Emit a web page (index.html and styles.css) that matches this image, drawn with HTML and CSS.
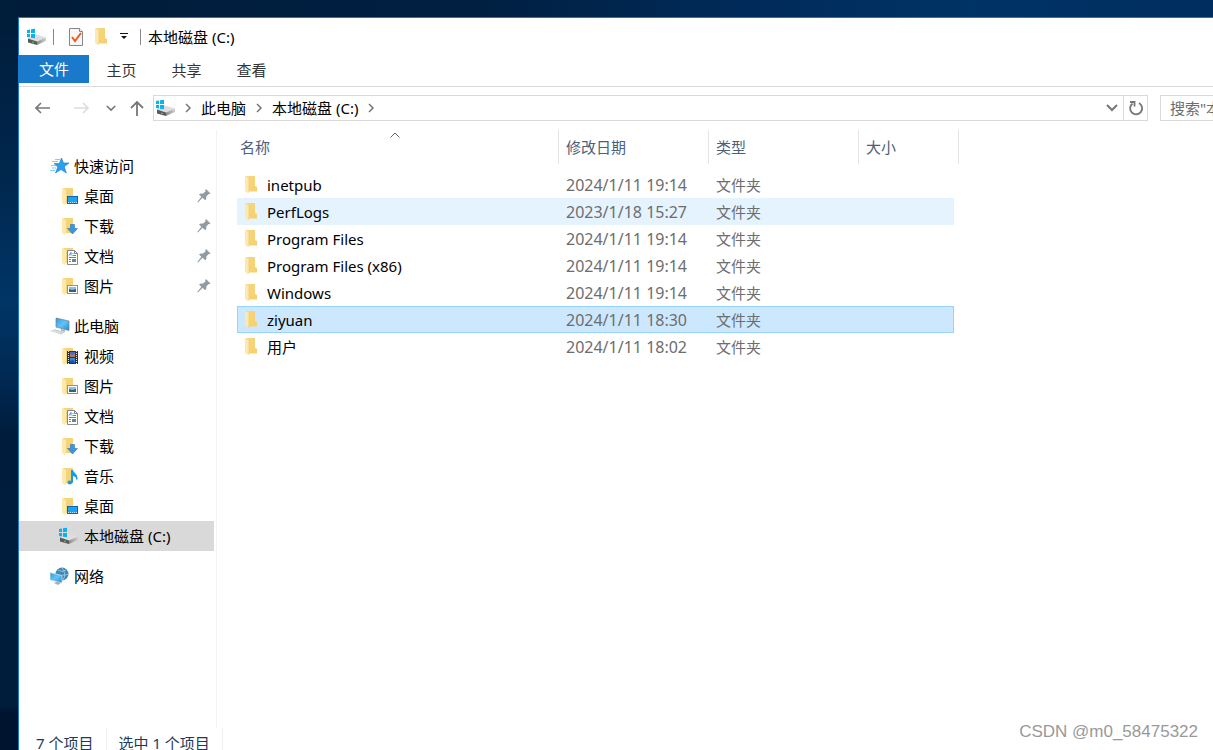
FILE: index.html
```
<!DOCTYPE html>
<html lang="zh-CN">
<head>
    <meta charset="UTF-8">
    <title>本地磁盘 (C:)</title>
    <link rel="stylesheet" href="styles.css">
</head>
<body>
    <!-- shared icons -->
    <svg class="sprite" aria-hidden="true">
        <defs>
            <linearGradient id="gFolder" x1="0" y1="0" x2="1" y2="1">
                <stop offset="0" stop-color="#f6d682"/>
                <stop offset="1" stop-color="#f5d06c"/>
            </linearGradient>
            <linearGradient id="gScreen" x1="0" y1="0" x2="1" y2="1">
                <stop offset="0" stop-color="#2f9be0"/>
                <stop offset="0.5" stop-color="#63c3f7"/>
                <stop offset="1" stop-color="#1d8ad6"/>
            </linearGradient>
            <linearGradient id="gDisk" x1="0" y1="0" x2="1" y2="0">
                <stop offset="0" stop-color="#8c8c8c"/>
                <stop offset="1" stop-color="#d0d0d0"/>
            </linearGradient>
        </defs>
        <symbol id="folder" viewBox="0 0 18 18">
            <path d="M2 0h9v10l2 1v4.500H5z" fill="url(#gFolder)"/>
            <path d="M1 0l4 2v13l-1 2-3-2z" fill="#fde8ae"/>
            <path d="M5 2v13l-1 2" fill="none" stroke="#edc968" stroke-width=".6"/>
        </symbol>
        <symbol id="side-folder" viewBox="0 0 18 18">
            <path d="M2 1h10v15H5z" fill="url(#gFolder)"/>
            <path d="M1 1l4 2v13l-1 2-3-2z" fill="#fde8ae"/>
        </symbol>
        <symbol id="desktop" viewBox="0 0 18 18">
            <use href="#side-folder"/>
            <rect x="6.500" y="9.500" width="10" height="7" fill="#1ba1f5" stroke="#0868a8"/>
            <path d="M7 15.500h9" stroke="#b8e6ff" stroke-dasharray="1 1"/>
        </symbol>
        <symbol id="download" viewBox="0 0 18 18">
            <use href="#side-folder"/>
            <path d="M9.500 7.500h4v4h3L11.500 17 6.500 11.500h3z" fill="#3b95e0" stroke="#2478c0" stroke-width=".6"/>
        </symbol>
        <symbol id="document" viewBox="0 0 18 18">
            <use href="#side-folder"/>
            <path d="M6.500 3.500h7l3 3v11h-10z" fill="#fff" stroke="#808890"/>
            <path d="M13.500 3.500v3h3" fill="none" stroke="#808890"/>
            <path d="M8 8.500l2-3v3M11.500 6.500h1M11.500 8.500h3.500M8 10.500h7M8 14.500h2M8 12.500h2" fill="none" stroke="#2f8fd8"/>
            <rect x="11" y="12" width="4" height="3" fill="#5f8b94"/>
        </symbol>
        <symbol id="picture" viewBox="0 0 18 18">
            <use href="#side-folder"/>
            <rect x="6.500" y="8.500" width="10" height="8" fill="#fff" stroke="#8f8f98"/>
            <rect x="8" y="10" width="7" height="5" fill="#8ac0ef"/>
            <path d="M8 12l3 1 4-1v3H8z" fill="#34645c"/>
        </symbol>
        <symbol id="video" viewBox="0 0 18 18">
            <use href="#side-folder"/>
            <rect x="6" y="4" width="11" height="13" fill="#333"/>
            <path d="M7.500 4v13M15.500 4v13" stroke="#ddd" stroke-dasharray="1 1"/>
            <rect x="9" y="5" width="5" height="5" fill="#4968d8"/>
            <rect x="9" y="11" width="5" height="5" fill="#3585d8"/>
            <path d="M9 7l3 1 2-2v4H9z" fill="#b77a42"/>
            <path d="M9 14l3-1 2 3H9z" fill="#234e9c"/>
        </symbol>
        <symbol id="music" viewBox="0 0 18 18">
            <use href="#side-folder"/>
            <path d="M10 3h2c.5 3 5 4 4.500 9l-1 1.500c0-3-1.500-4-3.500-4.500v6c-1 3-5 3-5.500 1s2-3 3.500-2z" fill="#179ae8"/>
        </symbol>
        <symbol id="disk" viewBox="0 0 20 18">
            <path d="M2 10.500l8-4 10 3-9 4z" fill="#dedede"/>
            <path d="M2 10.500l9 3v3.500l-9-2.500z" fill="#5a5a5a"/>
            <path d="M11 13.500l9-4V13l-9 4z" fill="url(#gDisk)"/>
            <path d="M6 14l2 .6" stroke="#4be05a"/>
            <path d="M1 2l3-.5V5H1zM5 1.300L9 .7V5H5zM1 6h3v3.500L1 9zM5 6h4v4.300l-4-.6z" fill="#08b4ee"/>
        </symbol>
        <symbol id="star" viewBox="0 0 20 18">
            <path d="M11.500 1l2 5H19l-4.700 3.700 2 6.300-5.300-3.500L5.500 16l2.300-6L4 6.500h5.300z" fill="#27a0ee" stroke="#1680cf" stroke-width=".6"/>
            <path d="M5 2.500h5M2 4.500h6M1 8.500h5M2 11h4M0 13.500h5" stroke="#70c0f2" stroke-width=".8"/>
        </symbol>
        <symbol id="computer" viewBox="0 0 20 18">
            <path d="M6 1l13 3v9.500L6 10z" fill="url(#gScreen)" stroke="#71818d" stroke-width=".7"/>
            <path d="M11 12l4 1v2l-4-1z" fill="#aab2ba"/>
            <path d="M0 14l5-1.700L15 15l-4 2.500z" fill="#ccd2d8"/>
            <path d="M3 14l8 2" stroke="#f3f5f7" stroke-dasharray="1 1"/>
        </symbol>
        <symbol id="network" viewBox="0 0 20 18">
            <circle cx="12" cy="7" r="6.500" fill="#3f87b5"/>
            <path d="M8 3q4 3 8 0M12 8q3 1 6-1M12 1q5 6 1 12" fill="none" stroke="#a5cfe3" stroke-width=".8"/>
            <path d="M0 5.500l12 3v7.500L0 13z" fill="url(#gScreen)" stroke="#dfe8ee" stroke-width=".7"/>
            <path d="M4 16l3-1.500 4 1.500-3 2z" fill="#a6afb7"/>
        </symbol>
        <symbol id="pin" viewBox="0 0 14 14">
            <path d="M9 0l4.500 4.500-1.300.8-.7-.2-2.300 2.600c.5 1.600 0 2.700-1 3.500L5.500 8.800 1 13.500.3 13l4-5.200L2 5.500c1-1 2.300-1.200 3.700-.7L8.500 2.500 8.200 1.200z" fill="#929ba3"/>
        </symbol>
        <symbol id="chevron-right" viewBox="0 0 8 10">
            <path d="M2 1l4 4-4 4" fill="none" stroke="#777" stroke-width="1.500"/>
        </symbol>
        <symbol id="chevron-down" viewBox="0 0 12 8">
            <path d="M1 1l5 5 5-5" fill="none" stroke="#777" stroke-width="2"/>
        </symbol>
    </svg>

    <div class="window">
        <header class="titlebar">
            <svg class="disk-icon"><use href="#disk"/></svg>
            <span class="divider"></span>
            <button class="quick" aria-label="属性">
                <svg width="16" height="18" viewBox="0 0 16 18">
                    <path d="M1.500.5h10l3 3v14h-13z" fill="#f7f7f9" stroke="#858585"/>
                    <path d="M11.500.5v3h3" fill="#fff" stroke="#858585"/>
                    <path d="M4 9l3 4 6-8" fill="none" stroke="#f05a18" stroke-width="2"/>
                </svg>
            </button>
            <button class="quick" aria-label="新建文件夹"><svg class="folder-icon"><use href="#folder"/></svg></button>
            <button class="quick more" aria-label="自定义快速访问工具栏">
                <svg width="8" height="7" viewBox="0 0 8 7"><path d="M0 .5h8" stroke="#111"/><path d="M1 3h6L4 6z" fill="#111"/></svg>
            </button>
            <span class="divider"></span>
            <h1>本地磁盘 (C:)</h1>
        </header>

        <nav class="ribbon">
            <button class="file-tab">文件</button>
            <button>主页</button>
            <button>共享</button>
            <button>查看</button>
        </nav>

        <div class="toolbar">
            <button class="back" aria-label="后退"><svg width="16" height="12" viewBox="0 0 16 12"><path d="M15 6H1M6 1L1 6l5 5" fill="none" stroke="#777" stroke-width="1.600"/></svg></button>
            <button class="forward" aria-label="前进"><svg width="16" height="12" viewBox="0 0 16 12"><path d="M1 6h14M10 1l5 5-5 5" fill="none" stroke="#ddd" stroke-width="1.600"/></svg></button>
            <button class="recent" aria-label="最近浏览的位置"><svg width="10" height="7"><use href="#chevron-down"/></svg></button>
            <button class="up" aria-label="上移"><svg width="14" height="16" viewBox="0 0 14 16"><path d="M7 16V2M1 8l6-6 6 6" fill="none" stroke="#777" stroke-width="1.800"/></svg></button>
            <div class="address">
                <svg class="disk-icon"><use href="#disk"/></svg>
                <svg class="crumb-arrow"><use href="#chevron-right"/></svg>
                <a href="#">此电脑</a>
                <svg class="crumb-arrow"><use href="#chevron-right"/></svg>
                <a href="#">本地磁盘 (C:)</a>
                <svg class="crumb-arrow"><use href="#chevron-right"/></svg>
                <button class="history" aria-label="以前的位置"><svg width="12" height="8"><use href="#chevron-down"/></svg></button>
                <button class="refresh" aria-label="刷新"><svg width="16" height="16" viewBox="0 0 16 16"><path d="M11 3a6 6 0 1 1-6.500.5M2 2h4.500v4.500" fill="none" stroke="#777" stroke-width="1.800"/></svg></button>
            </div>
            <input class="search" type="text" placeholder='搜索"本地磁盘 (C:)"' aria-label="搜索">
        </div>

        <main class="content">
            <nav class="sidebar">
                <div class="group">
                    <a class="root" href="#"><svg><use href="#star"/></svg>快速访问</a>
                    <a href="#"><svg><use href="#desktop"/></svg>桌面<svg class="pin"><use href="#pin"/></svg></a>
                    <a href="#"><svg><use href="#download"/></svg>下载<svg class="pin"><use href="#pin"/></svg></a>
                    <a href="#"><svg><use href="#document"/></svg>文档<svg class="pin"><use href="#pin"/></svg></a>
                    <a href="#"><svg><use href="#picture"/></svg>图片<svg class="pin"><use href="#pin"/></svg></a>
                </div>
                <div class="group">
                    <a class="root" href="#"><svg><use href="#computer"/></svg>此电脑</a>
                    <a href="#"><svg><use href="#video"/></svg>视频</a>
                    <a href="#"><svg><use href="#picture"/></svg>图片</a>
                    <a href="#"><svg><use href="#document"/></svg>文档</a>
                    <a href="#"><svg><use href="#download"/></svg>下载</a>
                    <a href="#"><svg><use href="#music"/></svg>音乐</a>
                    <a href="#"><svg><use href="#desktop"/></svg>桌面</a>
                    <a class="current" href="#"><svg><use href="#disk"/></svg>本地磁盘 (C:)</a>
                </div>
                <div class="group">
                    <a class="root" href="#"><svg><use href="#network"/></svg>网络</a>
                </div>
            </nav>

            <section class="files">
                <table>
                    <colgroup>
                        <col class="col-name">
                        <col class="col-date">
                        <col class="col-type">
                        <col class="col-size">
                        <col>
                    </colgroup>
                    <thead>
                        <tr>
                            <th><svg class="sort" viewBox="0 0 10 6"><path d="M.5 5.500L5 1l4.500 4.500" fill="none" stroke="#666"/></svg>名称</th>
                            <th>修改日期</th>
                            <th>类型</th>
                            <th colspan="2">大小</th>
                        </tr>
                    </thead>
                    <tbody>
                        <tr><td class="name"><svg class="folder-icon"><use href="#folder"/></svg>inetpub</td><td class="date">2024/1/11 19:14</td><td>文件夹</td><td></td></tr>
                        <tr class="hovered"><td class="name"><svg class="folder-icon"><use href="#folder"/></svg>PerfLogs</td><td class="date">2023/1/18 15:27</td><td>文件夹</td><td></td></tr>
                        <tr><td class="name"><svg class="folder-icon"><use href="#folder"/></svg>Program Files</td><td class="date">2024/1/11 19:14</td><td>文件夹</td><td></td></tr>
                        <tr><td class="name"><svg class="folder-icon"><use href="#folder"/></svg>Program Files (x86)</td><td class="date">2024/1/11 19:14</td><td>文件夹</td><td></td></tr>
                        <tr><td class="name"><svg class="folder-icon"><use href="#folder"/></svg>Windows</td><td class="date">2024/1/11 19:14</td><td>文件夹</td><td></td></tr>
                        <tr class="selected"><td class="name"><svg class="folder-icon"><use href="#folder"/></svg>ziyuan</td><td class="date">2024/1/11 18:30</td><td>文件夹</td><td></td></tr>
                        <tr><td class="name"><svg class="folder-icon"><use href="#folder"/></svg>用户</td><td class="date">2024/1/11 18:02</td><td>文件夹</td><td></td></tr>
                    </tbody>
                </table>
            </section>
        </main>

        <footer class="status">
            <span>7 个项目</span>
            <span>选中 1 个项目</span>
        </footer>
    </div>
    <div class="watermark">CSDN @m0_58475322</div>
</body>
</html>
```
FILE: styles.css
```
* {
    box-sizing: border-box;
}
body {
    margin: 0;
    height: 100vh;
    padding: 17px 0 0 18px;
    overflow: hidden;
    display: flex;
    font-family: "Noto Sans", "Noto Sans CJK SC", sans-serif;
    font-size: 15px;
    line-height: 20px;
    color: #000;
    background:
        linear-gradient(90deg, transparent 18px, #001c3a 18px, #002042 40%, #002a58 60%, #003366 80%, #002d60 100%) top / 100% 18px no-repeat,
        linear-gradient(180deg, #001c38 0%, #002850 25%, #003566 40%, #002a54 50%, #001c3c 58%, #001e3c 94%, #001430 95%, #001430 100%);
}
.sprite {
    position: absolute;
    width: 0;
    height: 0;
}
button {
    font: inherit;
    padding: 0;
    border: none;
    background: none;
    color: inherit;
    cursor: pointer;
}
a {
    color: inherit;
    text-decoration: none;
}
svg {
    display: block;
    flex-shrink: 0;
}
.window {
    flex: 1;
    min-width: 0;
    display: flex;
    flex-direction: column;
    background: #fff;
    border-top: 1px solid #1979ca;
    border-left: 1px solid #1979ca;
}
.disk-icon {
    width: 20px;
    height: 18px;
}
.folder-icon {
    width: 18px;
    height: 18px;
}

/* title bar */
.titlebar {
    height: 37px;
    padding-left: 7px;
    display: flex;
    align-items: center;
}
.titlebar h1 {
    margin: 0 0 0 7px;
    font-size: 15px;
    font-weight: 400;
}
.titlebar .divider {
    width: 1px;
    height: 16px;
    margin-left: 7px;
    background: #888;
}
.quick {
    margin-left: 10px;
}
.divider + .quick {
    margin-left: 14px;
}
.quick.more {
    margin-left: 8px;
    margin-right: 5px;
}

/* ribbon tabs */
.ribbon {
    height: 32px;
    display: flex;
    align-items: flex-start;
    border-bottom: 1px solid #dadbdc;
    color: #333;
}
.ribbon button {
    width: 65px;
    height: 30px;
}
.ribbon .file-tab {
    width: 70px;
    height: 28px;
    background: #1979ca;
    color: #fff;
}

/* address bar */
.toolbar {
    display: flex;
    align-items: center;
    padding: 8px 0 9px 16px;
}
.forward {
    margin-left: 22px;
}
.recent {
    margin-left: 17px;
}
.up {
    margin: 0 9px 0 14px;
}
.address {
    flex: 1;
    height: 26px;
    display: flex;
    align-items: center;
    padding-left: 1px;
    border: 1px solid #d9d9d9;
}
.crumb-arrow {
    width: 8px;
    height: 10px;
    margin: 0 9px;
}
.history {
    margin-left: auto;
    margin-right: 5px;
}
.refresh {
    width: 24px;
    height: 24px;
    padding-left: 4px;
    border-left: 1px solid #d9d9d9;
}
.search {
    width: 53px;
    height: 26px;
    margin-left: 12px;
    padding: 0 0 0 9px;
    border: 1px solid #d9d9d9;
    border-right: none;
    font: inherit;
    outline: none;
}
.search::placeholder {
    color: #6d6d6d;
}

/* content */
.content {
    flex: 1;
    min-height: 0;
    display: flex;
}
.sidebar {
    width: 198px;
    padding-top: 21px;
    border-right: 1px solid #f3f3f3;
}
.group {
    margin-bottom: 10px;
}
.sidebar a {
    height: 30px;
    margin-right: 2px;
    padding: 0 3px 0 42px;
    display: flex;
    align-items: center;
}
.sidebar a svg {
    width: 18px;
    height: 18px;
    margin-right: 5px;
}
.sidebar a.root {
    padding-left: 31px;
}
.sidebar a.root svg {
    width: 20px;
    margin-right: 4px;
}
.sidebar a.current {
    padding-left: 39px;
    background: #d9d9d9;
}
.sidebar a.current svg {
    width: 20px;
    margin-right: 6px;
}
.sidebar a .pin {
    width: 14px;
    height: 14px;
    margin: 0 0 0 auto;
}
.files {
    flex: 1;
    padding-left: 20px;
}
table {
    width: 722px;
    table-layout: fixed;
    border-collapse: separate;
    border-spacing: 0;
}
.col-name {
    width: 322px;
}
.col-date,
.col-type {
    width: 150px;
}
.col-size {
    width: 95px;
}
th {
    position: relative;
    height: 34px;
    padding: 0 7px;
    text-align: left;
    font-weight: 400;
    color: #4c607a;
    border-right: 1px solid #e5e5e5;
}
th:first-child {
    padding-left: 3px;
}
.sort {
    position: absolute;
    top: 2px;
    left: 153px;
    width: 10px;
    height: 6px;
}
thead::after {
    content: "";
    display: block;
    height: 7px;
}
td {
    height: 27px;
    padding: 0 7px;
    color: #6d6d6d;
}
.date {
    font-size: 16px;
}
.name {
    display: flex;
    align-items: center;
    gap: 5px;
    color: #000;
}
.hovered td {
    background: #e5f3ff;
}
.selected td {
    background: #cce8ff;
    border-top: 1px solid #99d1ff;
    border-bottom: 1px solid #99d1ff;
}
.selected td:first-child {
    padding-left: 6px;
    border-left: 1px solid #99d1ff;
}
.selected td:last-child {
    border-right: 1px solid #99d1ff;
}

/* status bar */
.status {
    height: 22px;
    display: flex;
    color: #1e395b;
}
.status span {
    padding: 5px 12px 0 11px;
    border-right: 1px solid #f0f0f0;
}
.status span:first-child {
    padding-left: 17px;
    padding-right: 13px;
}
.watermark {
    position: absolute;
    right: 15px;
    bottom: 8px;
    font-family: "Liberation Sans", Arial, sans-serif;
    font-size: 17px;
    color: #999;
}
```
